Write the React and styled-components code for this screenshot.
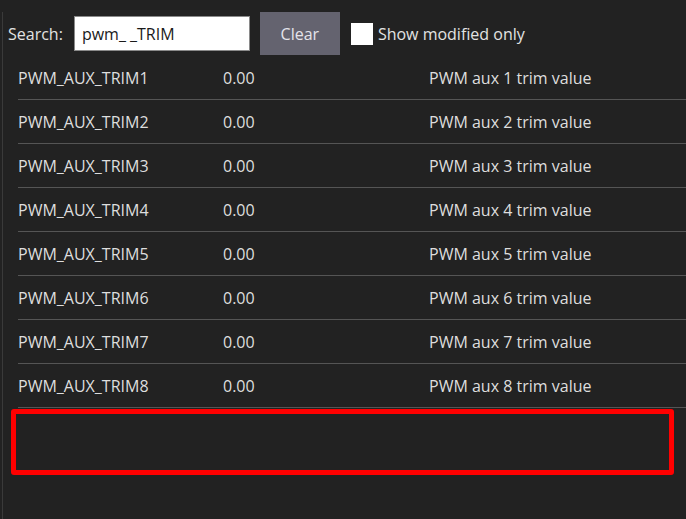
import React from "react";
import styled, { createGlobalStyle } from "styled-components";

const Global = createGlobalStyle`
  html, body { margin: 0; padding: 0; background: #222222; }
  body { font-family: "Open Sans", "Noto Sans", sans-serif; color: #dedede; }
  * { box-sizing: border-box; }
`;

const Page = styled.div`
  height: 519px;
  overflow: hidden;
  padding-top: 12px;
  padding-left: 2px;
`;

const Panel = styled.div`
  border-left: 1px solid #3a3a3a;
  height: 507px;
  display: flex;
  flex-direction: column;
`;

const Toolbar = styled.div`
  display: flex;
  align-items: center;
  height: 43px;
  padding-left: 5px;
  font-size: 16px;
`;

const Label = styled.span`
  color: #e2e2e2;
  margin-right: ${(p) => p.$gap || 0}px;
`;

const SearchInput = styled.input`
  width: 176px;
  height: 35px;
  border: 1px solid #8a8a8a;
  background: #ffffff;
  color: #1a1a1a;
  font-family: "Open Sans", "Noto Sans", sans-serif;
  font-size: 16px;
  padding: 0 7px;
  margin-right: 10px;
  outline: none;
`;

const Button = styled.button`
  width: 80px;
  height: 43px;
  border: none;
  background: #64636f;
  color: #e4e4ea;
  font-family: "Open Sans", "Noto Sans", sans-serif;
  font-size: 16px;
  margin-right: 11px;
  padding: 0;
`;

const Check = styled.span`
  width: 22px;
  height: 22px;
  background: #ffffff;
  margin-right: 5px;
`;

const Table = styled.div`
  display: flex;
  flex-direction: column;
  margin-top: 1px;
  margin-left: 15px;
`;

const Row = styled.div`
  display: grid;
  grid-template-columns: 205px 206px 1fr;
  align-items: center;
  height: 44px;
  border-bottom: 1px solid #555555;
  font-size: 16px;
  color: #dedede;
`;

const Cell = styled.span`
  white-space: nowrap;
`;

const Highlight = styled.div`
  margin-top: 1px;
  margin-left: 8px;
  width: 663px;
  height: 66px;
  border: 5px solid #ff0000;
  border-radius: 3px;
`;

const rows = [1, 2, 3, 4, 5, 6, 7, 8];

export default function App() {
  return (
    <>
      <Global />
      <Page>
        <Panel>
          <Toolbar>
            <Label $gap={11}>Search:</Label>
            <SearchInput defaultValue="pwm_ _TRIM" />
            <Button>Clear</Button>
            <Check />
            <Label>Show modified only</Label>
          </Toolbar>
          <Table>
            {rows.map((n) => (
              <Row key={n}>
                <Cell>PWM_AUX_TRIM{n}</Cell>
                <Cell>0.00</Cell>
                <Cell>PWM aux {n} trim value</Cell>
              </Row>
            ))}
          </Table>
          <Highlight />
        </Panel>
      </Page>
    </>
  );
}
